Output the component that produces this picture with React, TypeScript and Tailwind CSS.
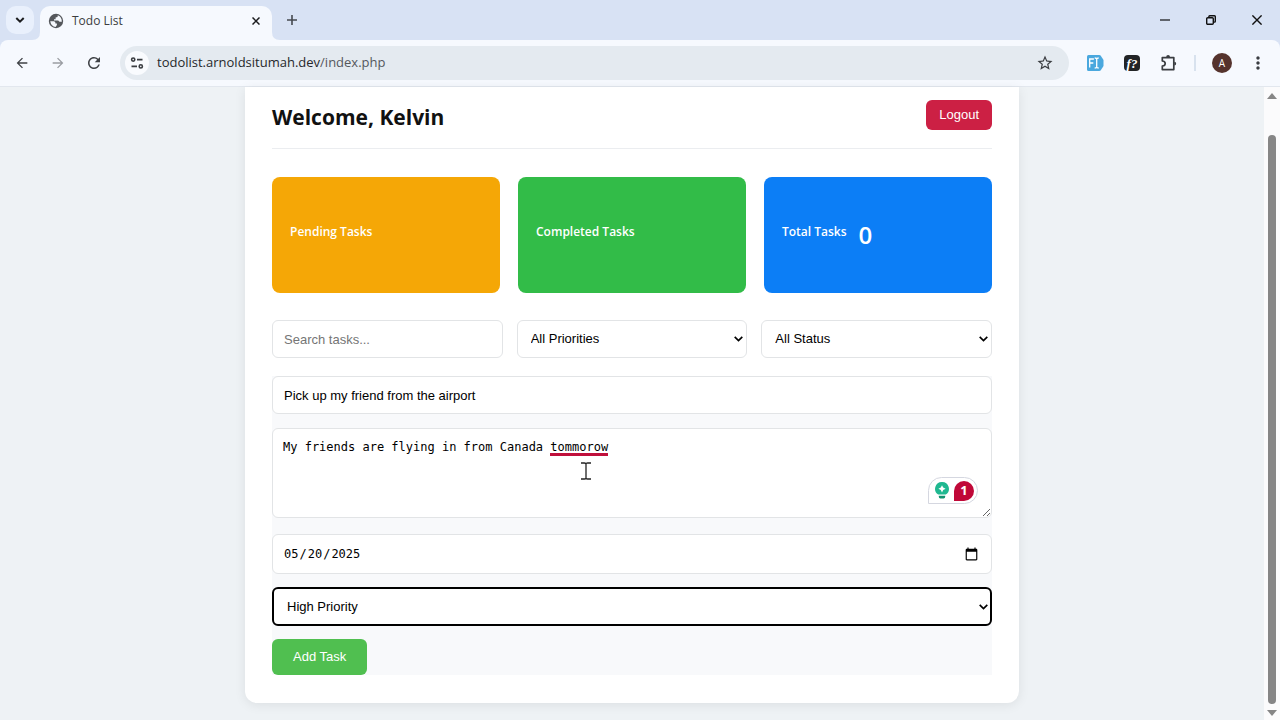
import { useState } from "react"
import { MdArrowBack, MdArrowForward, MdRefresh, MdStarBorder, MdMoreVert } from "react-icons/md"

const stats = [
    { label: "Pending Tasks", value: "", color: "bg-[#f5a706]" },
    { label: "Completed Tasks", value: "", color: "bg-[#32bc48]" },
    { label: "Total Tasks", value: "0", color: "bg-[#0c7ef6]" },
]

const field = "w-full rounded-md border border-[#e2e4e6] bg-white text-black outline-none"
const arial = "font-['Liberation_Sans',sans-serif] text-[13px]"
const mono = "font-['DejaVu_Sans_Mono',monospace] text-[12px]"

const TabStrip = () => {
    return (
        <div className="h-10 flex items-end justify-between bg-[#d8e2f4]">
            <div className="flex h-full items-end">
                <button aria-label="Search tabs" className="self-center ml-1.5 size-7 rounded-[10px] bg-[#e9f0fc] flex items-center justify-center">
                    <svg width="10" height="6" viewBox="0 0 10 6" fill="none" stroke="#1b1c1e" strokeWidth="2"><path d="M1.3 1 5 4.6 8.7 1" /></svg>
                </button>
                <div className="relative ml-1.5 w-[232px] h-[34px] px-2 pb-1 rounded-t-[10px] bg-[#f6f9fe] flex items-center gap-2">
                    <svg className="absolute right-full bottom-0" width="8" height="8" viewBox="0 0 8 8" fill="#f6f9fe"><path d="M8 0v8H0Q8 8 8 0z" /></svg>
                    <svg className="absolute left-full bottom-0" width="8" height="8" viewBox="0 0 8 8" fill="#f6f9fe"><path d="M0 0v8h8Q0 8 0 0z" /></svg>
                    <svg width="16" height="16" viewBox="0 0 16 16">
                        <circle cx="8" cy="8" r="7.2" fill="#55585c" />
                        <path d="M2.2 8.3h3.600q1.600 0 1.600 1.500v.8h1.500v1.500L7.600 14Q3.200 13.500 2.200 8.300zM9.800 2.300 9.500 3.900 7.600 4.500v1.700H6v1.300h4.200l1.300 1.300h2.300Q14 4 9.800 2.300z" fill="#f6f9fe" />
                    </svg>
                    <span className="flex-1 text-[12px] text-[#3b3d40]">Todo List</span>
                    <button aria-label="Close tab" className="size-4 flex items-center justify-center">
                        <svg width="8" height="8" viewBox="0 0 8 8" stroke="#1b1c1e" strokeWidth="1.5"><path d="M.5.5l7 7M7.5.5l-7 7" /></svg>
                    </button>
                </div>
                <button aria-label="New tab" className="self-center ml-3.5 size-3">
                    <svg width="12" height="12" viewBox="0 0 12 12" stroke="#45494f" strokeWidth="1.6"><path d="M6 1v10M1 6h10" /></svg>
                </button>
            </div>
            <div className="h-full flex items-center gap-9 pr-[18px]">
                <button aria-label="Minimize">
                    <svg width="10" height="10" viewBox="0 0 10 10" stroke="#111" strokeWidth="1.2"><path d="M0 5h10" /></svg>
                </button>
                <button aria-label="Restore">
                    <svg width="10" height="10" viewBox="0 0 10 10" fill="none" stroke="#111" strokeWidth="1.4"><rect x=".7" y="2.7" width="6.6" height="6.6" rx="1" /><path d="M2.9 2.6V1.5q0-.8.8-.8h4.8q.8 0 .8.8v4.8q0 .8-.8.8H7.4" /></svg>
                </button>
                <button aria-label="Close">
                    <svg width="10" height="10" viewBox="0 0 10 10" stroke="#111" strokeWidth="1.4"><path d="M.4.4l9.2 9.2M9.6.4.4 9.6" /></svg>
                </button>
            </div>
        </div>
    )
}

const Toolbar = () => {
    return (
        <div className="bg-[#d8e2f4]">
            <div className="h-[47px] rounded-t-lg bg-[#f6f9fe] border-b border-[#e2e7ee] flex items-center px-3">
                <div className="flex items-center gap-4 text-[#3f4246]">
                    <button aria-label="Back" className="p-0.5"><MdArrowBack className="size-4" /></button>
                    <button aria-label="Forward" className="p-0.5 text-[#9a9da2]"><MdArrowForward className="size-4" /></button>
                    <button aria-label="Reload" className="p-px"><MdRefresh className="size-[18px]" /></button>
                </div>
                <div className="ml-4 flex-1 h-[34px] rounded-full bg-[#e4eaf0] flex items-center pl-[5px] pr-[15px]">
                    <button aria-label="View site information" className="size-6 rounded-full bg-[#f9fbfe] flex items-center justify-center">
                        <svg width="14" height="14" viewBox="0 0 14 14" fill="none" stroke="#3a3d41" strokeWidth="1.6"><circle cx="3.2" cy="3.6" r="1.6" /><path d="M7 3.6h5.500M1.500 10.400h5.500" /><circle cx="10.8" cy="10.4" r="1.6" /></svg>
                    </button>
                    <p className="ml-2 flex-1 text-[13px] text-[#26282b]">todolist.arnoldsitumah.dev<span className="text-[#55585d]">/index.php</span></p>
                    <button aria-label="Bookmark this tab"><MdStarBorder className="size-[18px] text-[#3a3d41]" /></button>
                </div>
                <div className="ml-[18px] flex items-center">
                    <svg width="17" height="16" viewBox="0 0 17 16" role="img" aria-label="Form filler">
                        <path d="M1.500 0h10.700q1 0 1.600.8L16.500 5v6l-2.700 4.200q-.6.8-1.600.8H1.500Q0 16 0 14.500v-13Q0 0 1.500 0z" fill="#4aa8de" />
                        <path d="M2.700 12.500V4h4.200M2.700 8h3.600M7.700 3q2 0 2 1q0-1 2-1M7.700 13q2 0 2-1q0 1 2 1M9.700 4v8" fill="none" stroke="#fff" strokeWidth="1.3" />
                    </svg>
                    <span className="ml-5 size-4 rounded-sm bg-[#222426] text-white flex items-center justify-center font-['Liberation_Serif',serif] text-[13px] leading-none font-bold italic">f?</span>
                    <button aria-label="Extensions" className="ml-5">
                        <svg width="18" height="18" viewBox="0 0 18 18" fill="#3a3d41"><path d="M2.300 3.600H13.800V15.600H2.300V12.200Q5.200 11.900 5.200 9.600T2.300 7Z" fill="none" stroke="#3a3d41" strokeWidth="1.700" strokeLinejoin="round" /><path d="M6.200 3a1.900 1.900 0 0 1 3.800 0zM14.300 7.700a1.900 1.900 0 0 1 0 3.800z" /></svg>
                    </button>
                    <span className="ml-4 h-4 w-0.5 bg-[#d8e2ee]" />
                    <button aria-label="Profile" className="ml-4 size-5 rounded-full bg-[#55332d] text-white text-[10px] leading-none flex items-center justify-center">A</button>
                    <button aria-label="Menu" className="ml-4"><MdMoreVert className="size-5 text-[#3a3d41]" /></button>
                </div>
            </div>
        </div>
    )
}

const Scrollbar = () => {
    return (
        <div className="w-4 shrink-0 bg-[#fbfbfc] flex flex-col items-center pt-1.5 pb-1">
            <svg width="10" height="6" viewBox="0 0 10 6" fill="#868686"><path d="M0 6 5 0l5 6z" /></svg>
            <div className="mt-9 mb-1.5 w-2 flex-1 rounded-full bg-[#868686]" />
            <svg width="10" height="6" viewBox="0 0 10 6" fill="#868686"><path d="M0 0h10L5 6z" /></svg>
        </div>
    )
}

const SelectBox = ({ label, options, className }: { label: string; options: string[]; className: string }) => {
    return (
        <div className="relative w-full">
            <select aria-label={label} className={`${field} ${arial} appearance-none px-[13px] ${className}`}>
                {options.map((option) => <option key={option}>{option}</option>)}
            </select>
            <svg className="absolute right-1 top-1/2 -translate-y-1/2 pointer-events-none" width="9" height="6" viewBox="0 0 9 6" fill="none" stroke="#000" strokeWidth="1.700"><path d="M.7.9 4.500 4.500 8.300.9" /></svg>
        </div>
    )
}

const TaskForm = () => {
    const [title, setTitle] = useState("Pick up my friend from the airport")
    const [description, setDescription] = useState("My friends are flying in from Canada tommorow")
    const [date, setDate] = useState("2025-05-20")

    return (
        <form className="mt-[18px] bg-[#f8f9fb] flex flex-col items-start" onSubmit={(e) => e.preventDefault()}>
            <input aria-label="Task title" value={title} onChange={(e) => setTitle(e.target.value)} className={`${field} ${arial} h-[38px] px-[11px]`} />
            <div className={`relative w-full mt-3.5 mb-4 ${mono}`}>
                <textarea aria-label="Task description" spellCheck={false} value={description} onChange={(e) => setDescription(e.target.value)} className={`${field} block h-[90px] px-2.5 py-2.5 leading-4 resize-y`} />
                <span className="absolute top-[25px] left-[calc(11px+37ch)] w-[8ch] h-[3px] bg-[#c0103c]" />
                <svg className="absolute top-[34px] left-[308px]" width="12" height="18" viewBox="0 0 12 18" fill="none" stroke="#222" strokeWidth="1.3"><path d="M1 1h3.500Q6 1 6 2.200Q6 1 7.500 1H11M6 2v14M1 17h3.500Q6 17 6 15.800Q6 17 7.500 17H11" /></svg>
                <div className="absolute right-3.5 bottom-3.5 w-[50px] h-[27px] pl-1.5 pr-[3px] rounded-full rounded-bl-none border border-[#d5d7e0] bg-white flex items-center justify-between">
                    <svg width="14" height="17" viewBox="0 0 14 17"><path d="M7 0a6.800 6.800 0 0 1 3.800 12.500H3.200A6.800 6.800 0 0 1 7 0z" fill="#1fb890" /><path d="M7 3.200 8.200 5.600 10.600 6.800 8.200 8 7 10.400 5.800 8 3.400 6.800 5.800 5.600z" fill="#fff" /><path d="M3.800 13.800h6.400v1q0 1.600-1.600 1.600H5.400q-1.600 0-1.600-1.600z" fill="#12936f" /></svg>
                    <span className="size-5 rounded-full rounded-bl-none bg-[#c00838] text-white font-['Open_Sans',sans-serif] text-[13px] leading-none font-bold flex items-center justify-center">1</span>
                </div>
            </div>
            <input type="date" aria-label="Due date" value={date} onChange={(e) => setDate(e.target.value)} className={`${field} ${mono} h-10 px-2.5 [&::-webkit-calendar-picker-indicator]:size-[15px]`} />
            <div className="w-full mt-[13px]">
                <SelectBox label="Priority" options={["High Priority", "Medium Priority", "Low Priority"]} className="block h-[39px] border-2 border-black" />
            </div>
            <button type="submit" className={`${arial} mt-[13px] h-9 px-[21px] rounded-md bg-[#50bf50] text-white`}>Add Task</button>
        </form>
    )
}

export default function App() {
    return (
        <div className="h-screen flex flex-col overflow-hidden font-['Open_Sans',sans-serif]">
            <TabStrip />
            <Toolbar />
            <div className="flex-1 min-h-0 flex bg-[#eef2f5]">
                <main className="flex-1 px-4">
                    <div className="mx-auto max-w-[774px] px-[27px] pt-3 pb-7 rounded-b-xl bg-white shadow-[0_2px_12px_rgba(0,0,0,0.08)]">
                        <header className="flex items-start justify-between pb-[13px] border-b border-[#ebedf0]">
                            <h1 className="text-[21px] leading-9 font-bold text-[#111]">Welcome, Kelvin</h1>
                            <button className={`${arial} mt-px h-[30px] px-[13px] rounded-md bg-[#cc2044] text-white`}>Logout</button>
                        </header>
                        <div className="mt-7 grid grid-cols-3 gap-[18px]">
                            {stats.map((stat) => (
                                <div key={stat.label} className={`h-[116px] px-[18px] rounded-lg flex items-center gap-3 text-white ${stat.color}`}>
                                    <p className="pb-1.5 text-[12px] font-semibold">{stat.label}</p>
                                    {stat.value && <p className="text-[24px] font-semibold">{stat.value}</p>}
                                </div>
                            ))}
                        </div>
                        <div className="mt-[27px] grid grid-cols-3 gap-3.5">
                            <input aria-label="Search tasks" placeholder="Search tasks..." className={`${field} ${arial} h-[38px] px-[11px] placeholder:text-[#757575]`} />
                            <SelectBox label="Filter by priority" options={["All Priorities", "High", "Medium", "Low"]} className="h-[38px]" />
                            <SelectBox label="Filter by status" options={["All Status", "Pending", "Completed"]} className="h-[38px]" />
                        </div>
                        <TaskForm />
                    </div>
                </main>
                <Scrollbar />
            </div>
        </div>
    )
}
